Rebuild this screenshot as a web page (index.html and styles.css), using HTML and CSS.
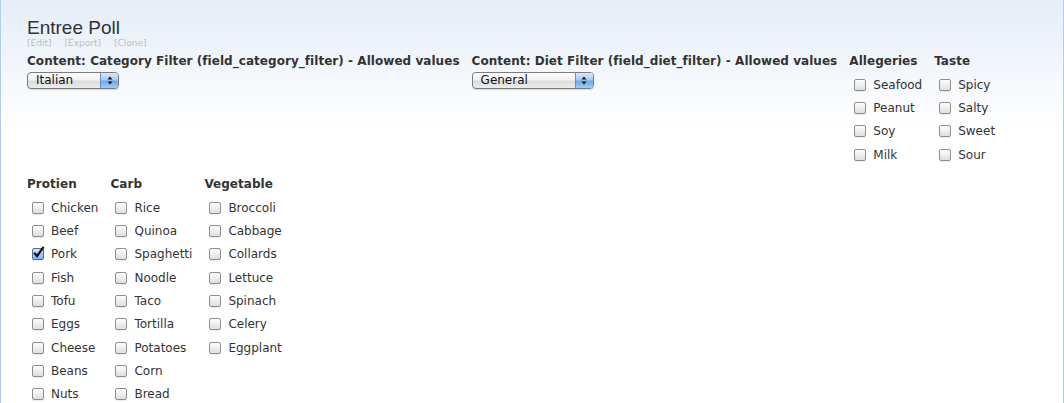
FILE: index.html
```html
<!DOCTYPE html>
<html>
<head>
<meta charset="utf-8">
<title>Entree Poll</title>
<link rel="stylesheet" href="styles.css">
</head>
<body>
<div class="page">
  <h1 class="title">Entree Poll</h1>
  <div class="actions"><span>[Edit]</span><span>[Export]</span><span>[Clone]</span></div>

  <div class="fields">
    <div class="field">
      <div class="field-label">Content: Category Filter (field_category_filter) - Allowed values</div>
      <div class="select select-cat"><span class="select-text">Italian</span><span class="select-arrows"><svg width="6" height="9" viewBox="0 0 6 9"><path d="M3 0.5 L5.5 3.5 L0.5 3.5 Z M3 8.5 L5.5 5.5 L0.5 5.5 Z" fill="#1a1a1a"/></svg></span></div>
    </div>
    <div class="field">
      <div class="field-label">Content: Diet Filter (field_diet_filter) - Allowed values</div>
      <div class="select select-diet"><span class="select-text">General</span><span class="select-arrows"><svg width="6" height="9" viewBox="0 0 6 9"><path d="M3 0.5 L5.5 3.5 L0.5 3.5 Z M3 8.5 L5.5 5.5 L0.5 5.5 Z" fill="#1a1a1a"/></svg></span></div>
    </div>
    <div class="field">
      <div class="field-label">Allegeries</div>
      <ul class="opts">
        <li><span class="cb"></span>Seafood</li>
        <li><span class="cb"></span>Peanut</li>
        <li><span class="cb"></span>Soy</li>
        <li><span class="cb"></span>Milk</li>
      </ul>
    </div>
    <div class="field">
      <div class="field-label">Taste</div>
      <ul class="opts">
        <li><span class="cb"></span>Spicy</li>
        <li><span class="cb"></span>Salty</li>
        <li><span class="cb"></span>Sweet</li>
        <li><span class="cb"></span>Sour</li>
      </ul>
    </div>
  </div>

  <div class="fields fields-bottom">
    <div class="field">
      <div class="field-label">Protien</div>
      <ul class="opts">
        <li><span class="cb"></span>Chicken</li>
        <li><span class="cb"></span>Beef</li>
        <li><span class="cb cb-on"><svg class="tick" width="13" height="13" viewBox="0 0 13 13"><path d="M2.2 6.6 L5 10.2 L11.6 0.8" fill="none" stroke="#111" stroke-width="2.2" stroke-linejoin="miter"/></svg></span>Pork</li>
        <li><span class="cb"></span>Fish</li>
        <li><span class="cb"></span>Tofu</li>
        <li><span class="cb"></span>Eggs</li>
        <li><span class="cb"></span>Cheese</li>
        <li><span class="cb"></span>Beans</li>
        <li><span class="cb"></span>Nuts</li>
      </ul>
    </div>
    <div class="field">
      <div class="field-label">Carb</div>
      <ul class="opts">
        <li><span class="cb"></span>Rice</li>
        <li><span class="cb"></span>Quinoa</li>
        <li><span class="cb"></span>Spaghetti</li>
        <li><span class="cb"></span>Noodle</li>
        <li><span class="cb"></span>Taco</li>
        <li><span class="cb"></span>Tortilla</li>
        <li><span class="cb"></span>Potatoes</li>
        <li><span class="cb"></span>Corn</li>
        <li><span class="cb"></span>Bread</li>
      </ul>
    </div>
    <div class="field">
      <div class="field-label">Vegetable</div>
      <ul class="opts">
        <li><span class="cb"></span>Broccoli</li>
        <li><span class="cb"></span>Cabbage</li>
        <li><span class="cb"></span>Collards</li>
        <li><span class="cb"></span>Lettuce</li>
        <li><span class="cb"></span>Spinach</li>
        <li><span class="cb"></span>Celery</li>
        <li><span class="cb"></span>Eggplant</li>
      </ul>
    </div>
  </div>
</div>
</body>
</html>
```

FILE: styles.css
```css
html, body {
  margin: 0;
  padding: 0;
}
body {
  min-height: 403px;
  background: linear-gradient(to bottom, #e5edf8 0px, #f3f7fc 70px, #ffffff 130px);
  border-left: 1px solid #b3cde8;
  border-right: 1px solid #b3cde8;
  box-sizing: border-box;
  font-family: "DejaVu Sans", Verdana, sans-serif;
  color: #333;
  overflow: hidden;
}
.page {
  padding: 17px 0 0 26px;
}
.title {
  margin: 0;
  font-family: "Liberation Sans", Arial, sans-serif;
  font-weight: normal;
  font-size: 19px;
  line-height: 22px;
  color: #333;
}
.actions {
  display: flex;
  gap: 13px;
  font-size: 9px;
  line-height: 10px;
  color: #bdbdbd;
  margin-top: -1px;
}
.fields {
  display: flex;
  align-items: flex-start;
  gap: 12px;
  margin-top: 5px;
}
.fields-bottom {
  margin-top: 10px;
}
.field-label {
  font-weight: bold;
  font-size: 12px;
  line-height: 16px;
  letter-spacing: 0.045px;
  color: #333;
  white-space: nowrap;
}
.select {
  margin-top: 3px;
  height: 17px;
  box-sizing: border-box;
  border: 1px solid #7c7c7c;
  border-radius: 4px;
  background: linear-gradient(to bottom, #ffffff 0%, #f2f2f2 45%, #dcdcdc 55%, #ececec 100%);
  display: flex;
  align-items: stretch;
  overflow: hidden;
  box-shadow: 0 1px 1px rgba(0,0,0,0.15);
}
.select-cat { width: 92px; }
.select-diet { width: 122px; }
.select-text {
  flex: 1;
  font-size: 12px;
  line-height: 15px;
  padding-left: 8px;
  color: #111;
}
.select-arrows {
  width: 17px;
  border-left: 1px solid #6a8fc2;
  background: linear-gradient(to bottom, #d7e8fb 0%, #a7cbf3 45%, #6fa9ea 55%, #9fcdf7 100%);
  display: flex;
  align-items: center;
  justify-content: center;
}
.opts {
  list-style: none;
  margin: 4px 0 0 0;
  padding: 0;
}
.opts li {
  display: flex;
  align-items: center;
  height: 23.3px;
  font-size: 12px;
  color: #333;
  white-space: nowrap;
}
.cb {
  position: relative;
  flex: none;
  width: 12px;
  height: 12px;
  box-sizing: border-box;
  margin: 0 7px 0 5px;
  border: 1px solid #8e8e8e;
  border-radius: 2px;
  background: linear-gradient(to bottom, #fdfdfd 0%, #eeeeee 50%, #dedede 100%);
  box-shadow: 0 1px 0 rgba(0,0,0,0.08);
}
.cb-on {
  border-color: #4b6e9c;
  background: linear-gradient(to bottom, #d6e7fb 0%, #a9cbf2 50%, #7eb2ec 100%);
}
.tick {
  position: absolute;
  left: -1px;
  top: -3px;
}
```
